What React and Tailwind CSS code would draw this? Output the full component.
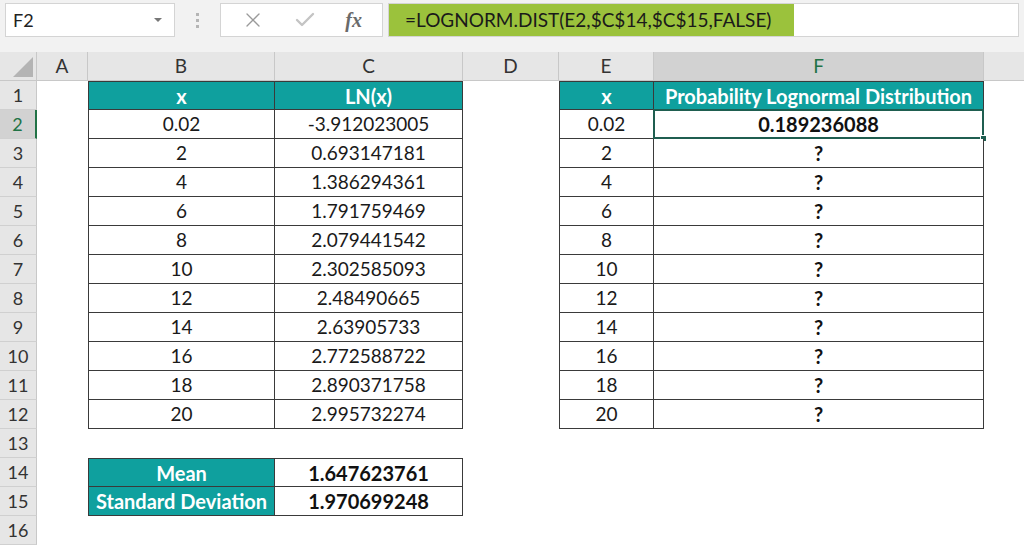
import React from "react";
import { X, Check } from "lucide-react";

const xs = ["0.02", "2", "4", "6", "8", "10", "12", "14", "16", "18", "20"];
const lns = [
  "-3.912023005",
  "0.693147181",
  "1.386294361",
  "1.791759469",
  "2.079441542",
  "2.302585093",
  "2.48490665",
  "2.63905733",
  "2.772588722",
  "2.890371758",
  "2.995732274",
];

const colLetters = ["A", "B", "C", "D", "E", "F", ""];

const FormulaBar = () => (
  <div className="h-[52px] bg-[#f2f2f2] flex items-start pt-[3px] px-[5px]">
    {/* name box */}
    <div className="w-[170px] h-[34px] bg-white border border-[#d4d4d4] flex items-center justify-between pl-[7px] pr-[12px]">
      <span className="text-[18px] text-[#222]">F2</span>
      <span className="w-0 h-0 border-l-[4px] border-r-[4px] border-t-[4px] border-l-transparent border-r-transparent border-t-[#777]" />
    </div>
    {/* dots */}
    <div className="w-[45px] h-[34px] flex flex-col items-center justify-center gap-[3px]">
      <span className="w-[3px] h-[3px] bg-[#b5b5b5]" />
      <span className="w-[3px] h-[3px] bg-[#b5b5b5]" />
      <span className="w-[3px] h-[3px] bg-[#b5b5b5]" />
    </div>
    {/* function buttons */}
    <div className="w-[163px] h-[34px] bg-white border border-[#d4d4d4] flex items-center justify-around px-[6px]">
      <X size={24} strokeWidth={1.3} className="text-[#9a9a9a]" />
      <Check size={24} strokeWidth={2.4} className="text-[#c4c4c4]" />
      <span className="text-[20px] italic font-semibold text-[#6a6a6a]" style={{ fontFamily: "'Liberation Serif', serif" }}>
        fx
      </span>
    </div>
    {/* formula */}
    <div className="flex-1 h-[34px] ml-[5px] bg-white border border-[#d4d4d4] flex items-stretch">
      <div className="w-[405px] bg-[#9bc23c] flex items-center pl-[16px] text-[19px] text-[#1a1a1a]">
        =LOGNORM.DIST(E2,$C$14,$C$15,FALSE)
      </div>
    </div>
  </div>
);

const RowHead = ({ n }) => {
  const sel = n === 2;
  return (
    <div
      className={`flex items-center justify-center text-[18px] border-b border-[#d0d0d0] ${
        sel
          ? "bg-[#d2d2d2] text-[#217346] border-r-2 border-r-[#217346]"
          : "bg-[#e6e6e6] text-[#333] border-r border-r-[#c8c8c8]"
      }`}
    >
      {n}
    </div>
  );
};

const Cell = ({ children, kind, left, top, selected }) => {
  if (!kind) return <div className="bg-white" />;
  const base = "relative flex items-center justify-center border-r border-b border-[#3a3a3a] whitespace-nowrap";
  const edge = `${left ? " border-l" : ""}${top ? " border-t" : ""}`;
  const style =
    kind === "head"
      ? " bg-[#0fa09e] text-white font-bold text-[20px]"
      : kind === "bold"
      ? " bg-white text-[#111] font-bold text-[20px]"
      : " bg-white text-[#1a1a1a] text-[19px]";
  return (
    <div className={base + edge + style}>
      {children}
      {selected && (
        <>
          <div className="absolute -inset-[1px] border-2 border-[#1f5e50]" />
          <div className="absolute -right-[4px] -bottom-[4px] w-[7px] h-[7px] bg-[#1f5e50] border border-white" />
        </>
      )}
    </div>
  );
};

export default function App() {
  const rows = Array.from({ length: 16 }, (_, i) => i + 1);
  return (
    <div className="w-[1024px] h-[545px] overflow-hidden bg-white" style={{ fontFamily: "Lato, 'Noto Sans', sans-serif" }}>
      <FormulaBar />
      <div className="grid grid-cols-[37px_51px_187px_188px_96px_95px_330px_40px] auto-rows-[29px]">
        {/* corner */}
        <div className="bg-[#e6e6e6] border-b border-r border-[#c8c8c8] relative">
          <svg className="absolute right-[3px] bottom-[3px]" width="20" height="20">
            <polygon points="20,0 20,20 0,20" fill="#b4b4b4" />
          </svg>
        </div>
        {colLetters.map((l, i) =>
          l === "F" ? (
            <div key={i} className="bg-[#d2d2d2] text-[#217346] text-[19px] flex items-center justify-center border-r border-b border-[#c8c8c8]">
              {l}
            </div>
          ) : (
            <div key={i} className={`bg-[#e6e6e6] text-[#333] text-[19px] flex items-center justify-center border-b border-[#c8c8c8] ${i < 6 ? "border-r" : ""}`}>
              {l}
            </div>
          )
        )}
        {rows.map((r) => {
          const inMain = r <= 12;
          const inStats = r === 14 || r === 15;
          let b = null,
            c = null,
            bKind = null,
            cKind = null;
          if (r === 1) {
            b = "x";
            c = "LN(x)";
            bKind = cKind = "head";
          } else if (inMain) {
            b = xs[r - 2];
            c = lns[r - 2];
            bKind = cKind = "data";
          } else if (inStats) {
            b = r === 14 ? "Mean" : "Standard Deviation";
            c = r === 14 ? "1.647623761" : "1.970699248";
            bKind = "head";
            cKind = "bold";
          }
          let e = null,
            f = null,
            eKind = null,
            fKind = null;
          if (r === 1) {
            e = "x";
            f = "Probability Lognormal Distribution";
            eKind = fKind = "head";
          } else if (inMain) {
            e = xs[r - 2];
            f = r === 2 ? "0.189236088" : "?";
            eKind = "data";
            fKind = "bold";
          }
          const topB = r === 1 || r === 14;
          return (
            <React.Fragment key={r}>
              <RowHead n={r} />
              <Cell />
              <Cell kind={bKind} left top={topB}>{b}</Cell>
              <Cell kind={cKind} top={topB}>{c}</Cell>
              <Cell />
              <Cell kind={eKind} left top={r === 1}>{e}</Cell>
              <Cell kind={fKind} top={r === 1} selected={r === 2}>{f}</Cell>
              <Cell />
            </React.Fragment>
          );
        })}
      </div>
    </div>
  );
}
